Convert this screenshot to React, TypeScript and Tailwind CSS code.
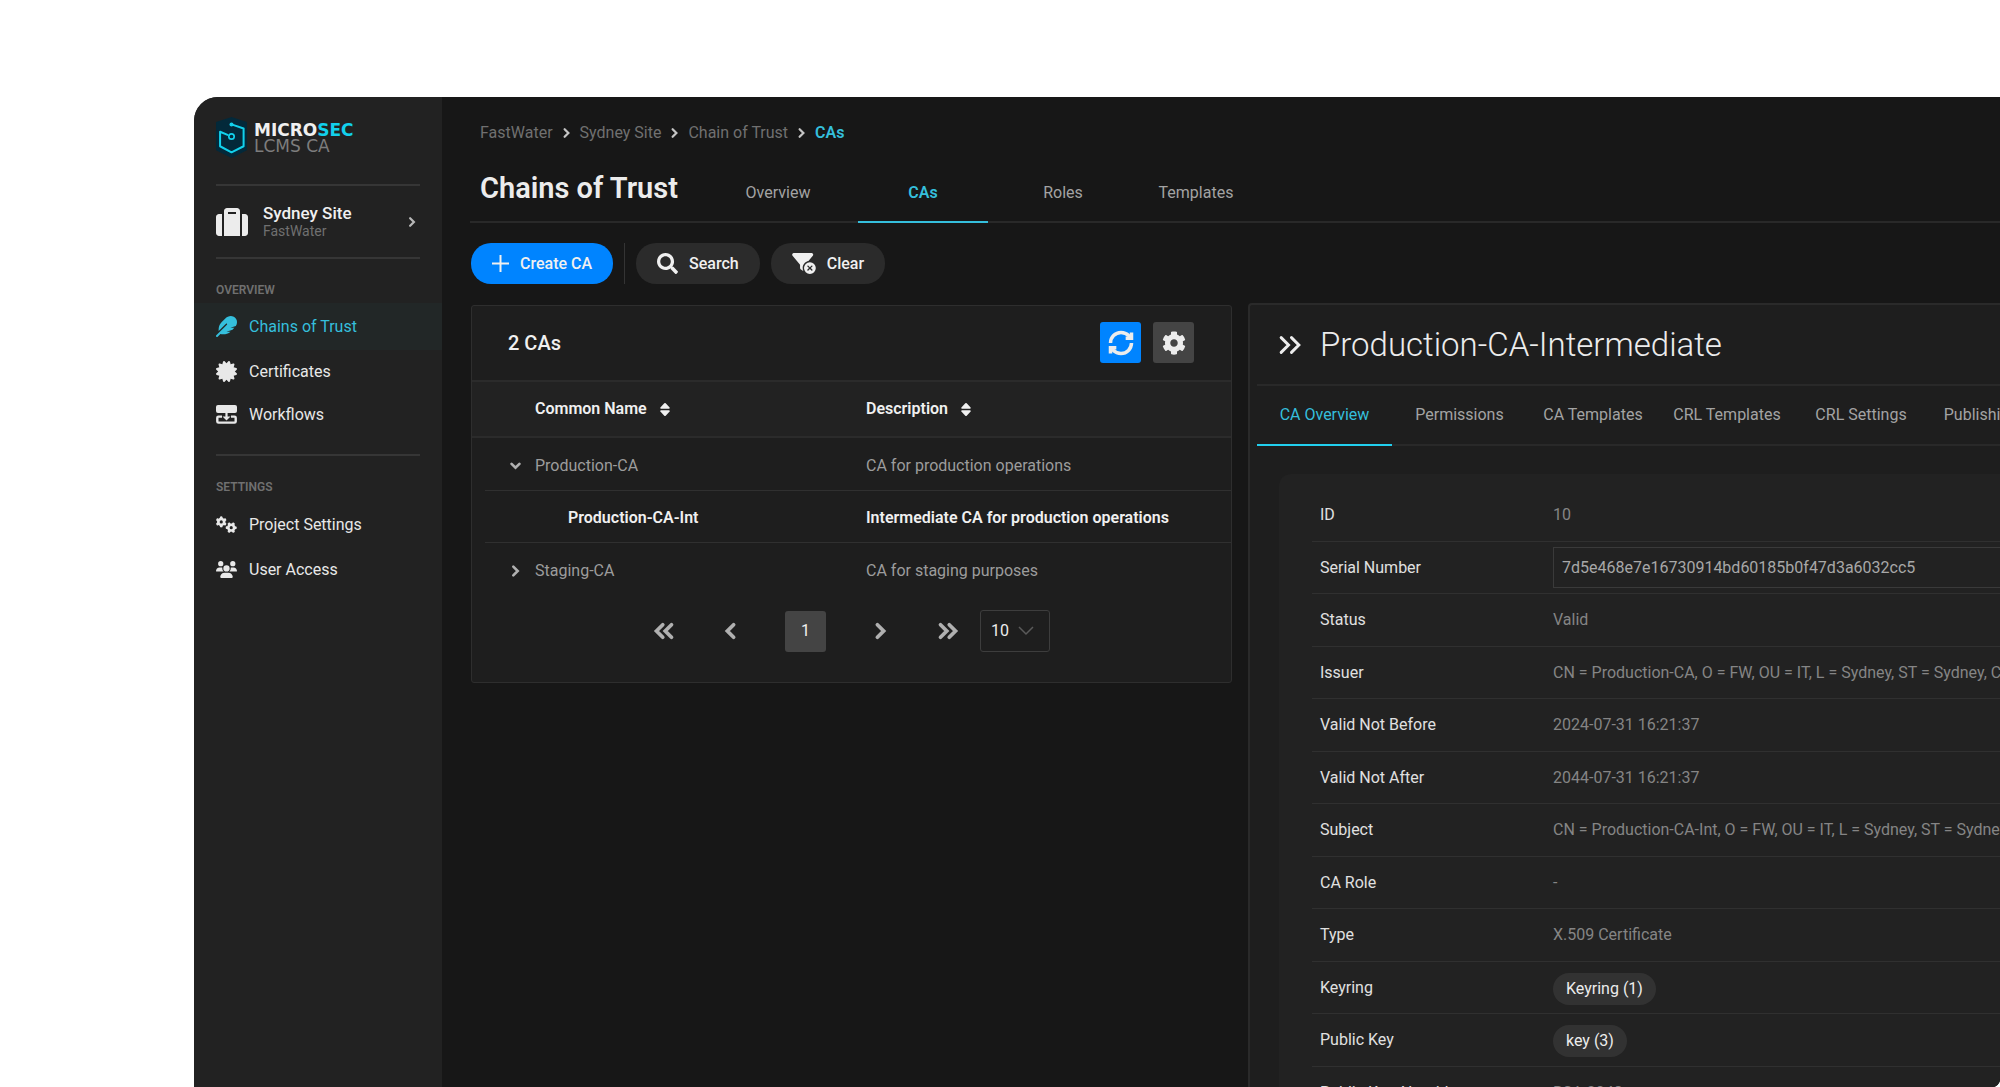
import React, { useState } from "react";
import { RefreshCw } from "lucide-react";
import { FaCertificate, FaCog, FaFeather, FaSearch, FaSuitcase } from "react-icons/fa";
import { FaFilterCircleXmark, FaGears, FaUsers } from "react-icons/fa6";

type Direction = "left" | "right" | "down";

interface ChevronProps {
  direction?: Direction;
  double?: boolean;
  stroke?: number;
  className?: string;
}

const chevronPaths: Record<Direction, string> = {
  left: "M8.5 3 3.5 8l5 5",
  right: "M3.5 3l5 5-5 5",
  down: "M1.5 5.5l4.5 4.5 4.5-4.5",
};

const Chevron: React.FC<ChevronProps> = ({ direction = "right", double, stroke = 3, className }) => (
  <svg
    viewBox={double ? "0 0 19 16" : "0 0 12 16"}
    fill="none"
    stroke="currentColor"
    strokeWidth={stroke}
    strokeLinecap="round"
    className={className}
    aria-hidden="true"
  >
    <path d={chevronPaths[direction]} />
    {double && <path d={chevronPaths[direction]} transform="translate(7 0)" />}
  </svg>
);

const SortIcon = () => (
  <svg viewBox="0 0 10 13" className="w-[10px] h-[13px]" fill="currentColor" aria-hidden="true">
    <path d="M5 0a1 1 0 0 1 .7.3l3.7 3.9c.8.8.4 1.5-.6 1.5H1.2c-1 0-1.4-.7-.6-1.5L4.3.3A1 1 0 0 1 5 0z" />
    <path d="M5 13a1 1 0 0 0 .7-.3l3.7-3.9c.8-.8.4-1.5-.6-1.5H1.2c-1 0-1.4.7-.6 1.5l3.7 3.9a1 1 0 0 0 .7.3z" />
  </svg>
);

const WorkflowIcon = ({ className }: { className?: string }) => (
  <svg viewBox="0 0 21 19" className={className} fill="currentColor" aria-hidden="true">
    <rect x="0" y="0" width="21" height="8" rx="2" />
    <path
      d="M6 11.6H2.5a1.2 1.2 0 0 0-1.2 1.2v3.6a1.2 1.2 0 0 0 1.2 1.2h16a1.2 1.2 0 0 0 1.2-1.2v-3.6a1.2 1.2 0 0 0-1.2-1.2H15"
      fill="none"
      stroke="currentColor"
      strokeWidth="2.4"
    />
    <path d="M9.4 8h2.2v3.6h2.9l-4 3.8-4-3.8h2.9z" />
  </svg>
);

const ShieldLogo = () => (
  <svg viewBox="0 0 92 122" className="w-[31px] h-[41px]" fill="none" aria-hidden="true">
    <path d="M46 0 92 15v84l-46 23L0 99V15z" fill="#03293a" />
    <path d="M46 22 82 34v53L46 105 12 87V44l24 10" stroke="#12d1ec" strokeWidth="6" strokeLinejoin="round" />
    <circle cx="46" cy="22" r="6" fill="#12d1ec" />
    <circle cx="46" cy="58" r="8" fill="#03293a" stroke="#12d1ec" strokeWidth="5" />
  </svg>
);

const overviewItems = [
  { label: "Chains of Trust", icon: FaFeather, active: true },
  { label: "Certificates", icon: FaCertificate },
  { label: "Workflows", icon: WorkflowIcon },
];

const settingsItems = [
  { label: "Project Settings", icon: FaGears },
  { label: "User Access", icon: FaUsers },
];

const tabs = [
  { label: "Overview", width: "w-[160px]" },
  { label: "CAs", width: "w-[130px]" },
  { label: "Roles", width: "w-[150px]" },
  { label: "Templates", width: "w-[116px]" },
];

const detailTabs = [
  { label: "CA Overview", width: "w-[135px]" },
  { label: "Permissions", width: "w-[135px]" },
  { label: "CA Templates", width: "w-[132px]" },
  { label: "CRL Templates", width: "w-[136px]" },
  { label: "CRL Settings", width: "w-[132px]" },
  { label: "Publishing", width: "w-[108px]" },
];

const rows = [
  { name: "Production-CA", description: "CA for production operations", expand: "down" as Direction },
  { name: "Production-CA-Int", description: "Intermediate CA for production operations", selected: true },
  { name: "Staging-CA", description: "CA for staging purposes", expand: "right" as Direction },
];

const details = [
  { label: "ID", value: "10" },
  { label: "Serial Number", value: "7d5e468e7e16730914bd60185b0f47d3a6032cc5", kind: "input" },
  { label: "Status", value: "Valid" },
  { label: "Issuer", value: "CN = Production-CA, O = FW, OU = IT, L = Sydney, ST = Sydney, C = AU" },
  { label: "Valid Not Before", value: "2024-07-31 16:21:37" },
  { label: "Valid Not After", value: "2044-07-31 16:21:37" },
  { label: "Subject", value: "CN = Production-CA-Int, O = FW, OU = IT, L = Sydney, ST = Sydney, C = AU" },
  { label: "CA Role", value: "-" },
  { label: "Type", value: "X.509 Certificate" },
  { label: "Keyring", value: "Keyring (1)", kind: "chip" },
  { label: "Public Key", value: "key (3)", kind: "chip" },
  { label: "Public Key Algorithm", value: "RSA 2048" },
];

const NavItem = ({ label, icon: Icon, active }: { label: string; icon: React.ElementType; active?: boolean }) => (
  <li>
    <a
      href="#"
      className={`flex items-center gap-3 px-[22px] ${
        active ? "h-[47px] bg-[#222727] text-[#35bfdc]" : "h-[43px] text-[#e8e8e8]"
      }`}
    >
      <Icon className="w-[21px] h-[21px]" />
      {label}
    </a>
  </li>
);

const Sidebar = () => (
  <aside className="w-[248px] shrink-0 bg-[#222222]">
    <div className="flex items-center gap-[7px] px-[22px] pt-5">
      <ShieldLogo />
      <div className="font-['DejaVu_Sans',sans-serif] text-[17px] leading-4">
        <div className="font-bold text-[#f0f0f0]">
          MICRO<span className="text-[#12d1ec]">SEC</span>
        </div>
        <div className="text-[#7d7d7d]">LCMS CA</div>
      </div>
    </div>
    <div className="mx-[22px] mt-[26px] border-y-2 border-[#363636]">
      <button className="flex w-full items-center gap-[15px] h-[71px] text-left">
        <FaSuitcase className="w-8 h-8 text-[#ececec]" />
        <span className="flex-1">
          <span className="block text-[17px] leading-[18px] font-medium text-[#f0f0f0]">Sydney Site</span>
          <span className="block text-sm leading-[18px] text-[#707070]">FastWater</span>
        </span>
        <Chevron className="w-3 h-3 mr-[2px] text-[#b8b8b8]" />
      </button>
    </div>
    <nav>
      <h2 className="px-[22px] pt-[23px] pb-1 text-xs leading-4 font-semibold text-[#707070]">OVERVIEW</h2>
      <ul className="pt-px">
        {overviewItems.map((item) => (
          <NavItem key={item.label} {...item} />
        ))}
      </ul>
      <div className="mx-[22px] mt-[18px] border-t-2 border-[#363636]" />
      <h2 className="px-[22px] pt-[23px] pb-2 text-xs leading-4 font-semibold text-[#707070]">SETTINGS</h2>
      <ul className="space-y-[2px]">
        {settingsItems.map((item) => (
          <NavItem key={item.label} {...item} />
        ))}
      </ul>
    </nav>
  </aside>
);

const Breadcrumb = () => (
  <nav aria-label="Breadcrumb" className="flex items-center gap-2 pl-[10px] leading-6 text-[#707070]">
    {["FastWater", "Sydney Site", "Chain of Trust"].map((crumb) => (
      <React.Fragment key={crumb}>
        <a href="#">{crumb}</a>
        <Chevron className="w-[11px] h-3 text-[#c4c4c4]" />
      </React.Fragment>
    ))}
    <a href="#" className="font-semibold text-[#35bfdc]">
      CAs
    </a>
  </nav>
);

const Header = () => (
  <header className="pt-6">
    <Breadcrumb />
    <div className="flex items-end mt-4 border-b-2 border-[#292929]">
      <h1 className="w-[228px] shrink-0 pl-[10px] h-[60px] text-[29px] leading-[54px] font-semibold text-[#ececec]">
        Chains of Trust
      </h1>
      <div role="tablist" className="flex">
        {tabs.map(({ label, width }) => (
          <button
            key={label}
            role="tab"
            aria-selected={label === "CAs"}
            className={`-mb-[2px] h-[62px] pt-1 border-b-2 ${width} ${
              label === "CAs" ? "border-[#35bfdc] font-semibold text-[#35bfdc]" : "border-transparent text-[#a3a3a3]"
            }`}
          >
            {label}
          </button>
        ))}
      </div>
    </div>
  </header>
);

const Toolbar = () => (
  <div className="flex items-center gap-[11px] pt-5 pb-[21px] pl-px font-medium text-[#f0f0f0]">
    <button className="flex items-center gap-[11px] h-[41px] px-[21px] rounded-[20px] bg-[#0084ff]">
      <svg viewBox="0 0 17 17" className="w-[17px] h-[17px]" stroke="currentColor" strokeWidth="2" aria-hidden="true">
        <path d="M8.5 0v17M0 8.5h17" />
      </svg>
      Create CA
    </button>
    <div className="w-px h-[41px] bg-[#343434]" />
    <button className="flex items-center gap-[11px] h-[41px] px-[21px] rounded-[20px] bg-[#2b2b2b]">
      <FaSearch className="w-[21px] h-[21px]" />
      Search
    </button>
    <button className="flex items-center gap-[11px] h-[41px] px-[21px] rounded-[20px] bg-[#2b2b2b]">
      <FaFilterCircleXmark className="w-6 h-[21px]" />
      Clear
    </button>
  </div>
);

const Pagination = () => {
  const [pageSize, setPageSize] = useState("10");

  return (
    <nav aria-label="Table navigation" className="flex items-center justify-center pt-[14px] pb-[30px] pr-[10px] text-[#b0b0b0]">
      <div className="flex items-center gap-[26px]">
        <button aria-label="First page" className="flex items-center justify-center w-[41px] h-[41px]">
          <Chevron direction="left" double className="w-6 h-5" />
        </button>
        <button aria-label="Previous page" className="flex items-center justify-center w-[41px] h-[41px]">
          <Chevron direction="left" className="w-[15px] h-5" />
        </button>
        <button className="w-[41px] h-[41px] mx-2 rounded-[3px] bg-[#444444] text-[#f0f0f0]">1</button>
        <button aria-label="Next page" className="flex items-center justify-center w-[41px] h-[41px]">
          <Chevron className="w-[15px] h-5" />
        </button>
        <button aria-label="Last page" className="flex items-center justify-center w-[41px] h-[41px]">
          <Chevron double className="w-6 h-5" />
        </button>
      </div>
      <div className="relative ml-3">
        <select
          aria-label="Rows per page"
          value={pageSize}
          onChange={(e) => setPageSize(e.target.value)}
          className="w-[70px] h-[42px] pl-[10px] appearance-none rounded-[3px] border border-[#3d3d3d] bg-[#1e1e1e] text-[#ececec]"
        >
          <option>10</option>
          <option>25</option>
          <option>50</option>
        </select>
        <svg
          viewBox="0 0 16 10"
          className="absolute right-4 top-4 w-4 h-[10px] pointer-events-none"
          fill="none"
          stroke="#5a5a5a"
          strokeWidth="1.5"
          aria-hidden="true"
        >
          <path d="M1 1l7 7 7-7" />
        </svg>
      </div>
    </nav>
  );
};

const CaTable = () => (
  <section className="self-start rounded-[3px] border border-[#2e2e2e] bg-[#1e1e1e]">
    <div className="flex items-center h-[74px] pb-px pl-9 pr-[37px] gap-3">
      <h2 className="flex-1 text-xl font-medium text-[#f0f0f0]">2 CAs</h2>
      <button aria-label="Refresh" className="flex items-center justify-center w-[41px] h-[41px] rounded-[3px] bg-[#0084ff]">
        <RefreshCw size={28} strokeWidth={3} strokeLinecap="butt" strokeLinejoin="miter" color="#ececec" />
      </button>
      <button
        aria-label="Table settings"
        className="flex items-center justify-center w-[41px] h-[41px] rounded-[3px] bg-[#444444] text-[#ececec]"
      >
        <FaCog size={24} />
      </button>
    </div>
    <table className="w-full table-fixed border-separate border-spacing-0 text-left">
      <colgroup>
        <col className="w-[13px]" />
        <col className="w-[50px]" />
        <col className="w-[331px]" />
        <col />
      </colgroup>
      <thead>
        <tr className="h-[58px] bg-[#222222] text-[#f0f0f0]">
          <td className="border-y-2 border-[#2b2b2b]" />
          <td className="border-y-2 border-[#2b2b2b]" />
          {["Common Name", "Description"].map((column) => (
            <th key={column} className="border-y-2 border-[#2b2b2b] font-semibold">
              <button className="flex items-center gap-[13px]">
                {column}
                <SortIcon />
              </button>
            </th>
          ))}
        </tr>
      </thead>
      <tbody>
        {rows.map(({ name, description, expand, selected }, i) => {
          const border = i < rows.length - 1 ? "border-b border-[#303030]" : "";
          return (
            <tr
              key={name}
              className={`odd:h-[53px] even:h-[52px] ${selected ? "font-semibold text-[#f0f0f0]" : "text-[#9c9c9c]"}`}
            >
              <td />
              <td className={`pt-[3px] ${border}`}>
                {expand && (
                  <button aria-label="Toggle row" className="flex w-full justify-center pl-[14px] pr-[3px]">
                    <Chevron direction={expand} className="w-[11px] h-[14px] text-[#b0b0b0]" />
                  </button>
                )}
              </td>
              <td className={`pt-[3px] ${border} ${selected ? "pl-[33px]" : ""}`}>{name}</td>
              <td className={`pt-[3px] ${border}`}>{description}</td>
            </tr>
          );
        })}
      </tbody>
    </table>
    <Pagination />
  </section>
);

const DetailValue = ({ value, kind }: { value: string; kind?: string }) => {
  if (kind === "input") {
    return (
      <input
        id="serial-number"
        readOnly
        value={value}
        className="w-full h-[41px] pl-2 border border-r-0 border-[#3a3a3a] bg-transparent text-[#a8a8a8] outline-none"
      />
    );
  }
  if (kind === "chip") {
    return (
      <button className="h-8 px-[13px] mt-[2px] rounded-full bg-[#323232] text-[#ececec]">{value}</button>
    );
  }
  return <>{value}</>;
};

const DetailPanel = () => (
  <section className="-mt-[2px] overflow-hidden rounded-tl-[4px] border-t-2 border-l-2 border-[#2a2a2a] bg-[#1e1e1e]">
    <div className="flex items-center gap-4 h-[79px] pl-[25px] ml-2">
      <button aria-label="Collapse panel" className="-ml-[7px]">
        <Chevron double stroke={2} className="w-[28px] h-6 text-[#ececec]" />
      </button>
      <h2 className="text-[33px] leading-10 font-light whitespace-nowrap text-[#ececec]">Production-CA-Intermediate</h2>
    </div>
    <div role="tablist" className="flex ml-[7px] border-y-2 border-[#292929]">
      {detailTabs.map(({ label, width }, i) => (
        <button
          key={label}
          role="tab"
          aria-selected={i === 0}
          className={`-mb-[2px] h-[60px] shrink-0 border-b-2 whitespace-nowrap ${width} ${
            i === 0 ? "border-[#22cfee] text-[#35bfdc]" : "border-transparent text-[#a3a3a3]"
          }`}
        >
          {label}
        </button>
      ))}
    </div>
    <dl className="mt-7 ml-[29px] pt-[15px] pl-[33px] rounded-tl-xl bg-[#222222]">
      {details.map(({ label, value, kind }) => (
        <div
          key={label}
          className="flex items-center pl-2 odd:h-[53px] even:h-[52px] border-b border-[#303030] whitespace-nowrap"
        >
          <dt className="w-[233px] shrink-0 text-[#e0e0e0]">
            {kind === "input" ? <label htmlFor="serial-number">{label}</label> : label}
          </dt>
          <dd className="flex-1 min-w-0 text-[#858585]">
            <DetailValue value={value} kind={kind} />
          </dd>
        </div>
      ))}
    </dl>
  </section>
);

const App: React.FC = () => {
  return (
    <div className="h-screen overflow-hidden bg-white pl-[194px] pt-[97px] font-['Roboto',sans-serif] text-base">
      <div className="flex h-full overflow-hidden rounded-tl-3xl rounded-br-lg bg-[#171717]">
        <Sidebar />
        <main className="flex flex-1 min-w-0 flex-col pl-7">
          <Header />
          <Toolbar />
          <div className="grid flex-1 grid-cols-[minmax(0,761fr)_minmax(0,752fr)] gap-4 pl-px">
            <CaTable />
            <DetailPanel />
          </div>
        </main>
      </div>
    </div>
  );
};

export default App;
